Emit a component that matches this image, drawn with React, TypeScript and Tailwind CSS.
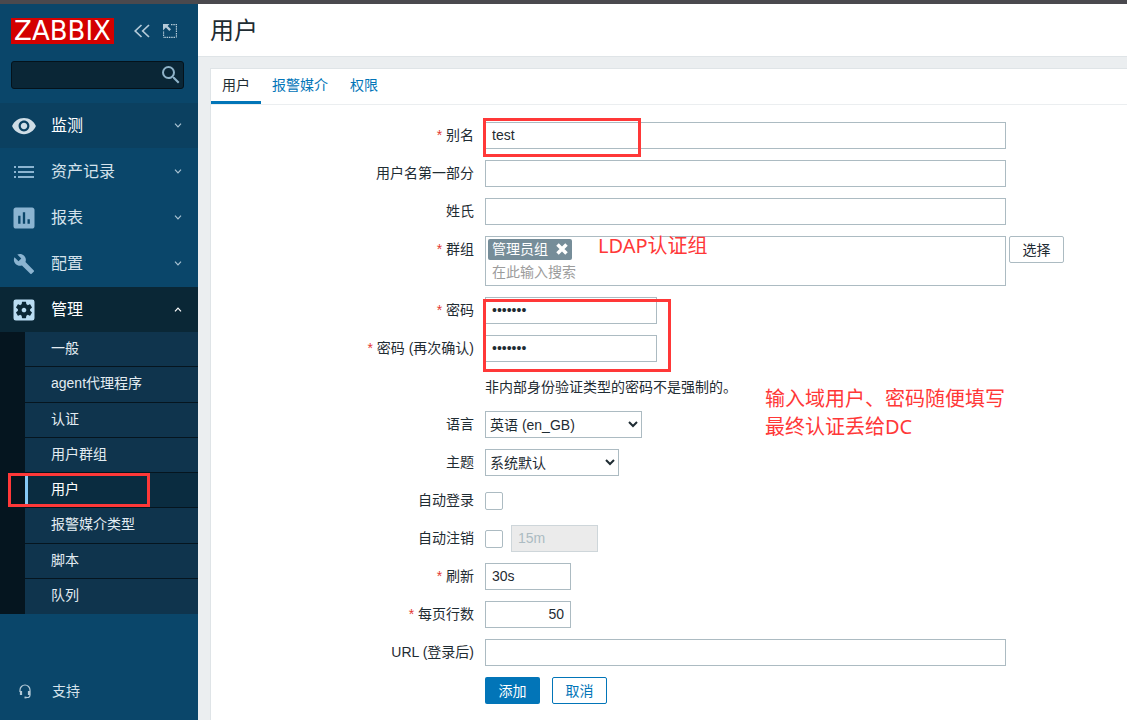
import { useState, type InputHTMLAttributes, type ReactNode } from 'react'
import { clsx } from 'clsx'
import { MdAssessment, MdBuild, MdSearch, MdSettingsApplications, MdVisibility } from 'react-icons/md'

function ListIcon() {
  return (
    <svg className="h-3 w-5" fill="currentColor" viewBox="0 0 20 12">
      <path d="M0 0h2v2H0zM4 0h16v2H4zM0 5h2v2H0zM4 5h16v2H4zM0 10h2v2H0zM4 10h16v2H4z" />
    </svg>
  )
}

function HeadsetIcon() {
  return (
    <svg className="h-[15px] w-3" fill="none" stroke="currentColor" viewBox="0 0 12 15">
      <path d="M1 8V6a5 5 0 0 1 10 0v5a2.500 2.500 0 0 1-2.500 2.500H7" strokeWidth="1.200" />
      <path d="M2 7v4M10 7v4" strokeWidth="2.200" />
      <path d="M5.500 13.500h2" strokeWidth="1.800" />
    </svg>
  )
}

function CollapseIcon() {
  return (
    <svg className="h-3.5 w-4" fill="none" stroke="currentColor" strokeWidth="1.700" viewBox="0 0 16 14">
      <path d="M7.500 1 1.200 7l6.300 6M15 1 8.700 7l6.300 6" />
    </svg>
  )
}

function KioskIcon() {
  return (
    <svg className="h-3.5 w-3.5" fill="none" stroke="currentColor" viewBox="0 0 14 14">
      <path d="M8 .5h6M13.500 2v12M12 13.500H0M.5 12V7" strokeDasharray="1.500 .8" strokeWidth="1.300" />
      <path d="M0 0h6.500L4.600 1.900l3.400 3.400L6.300 7 2.900 3.600 0 6.500z" fill="currentColor" stroke="none" />
    </svg>
  )
}

function Chevron({ up }: { up?: boolean }) {
  return (
    <svg
      className={clsx('h-[5px] w-2', up ? 'text-white' : 'text-[#a9c3d3]')}
      fill="none"
      stroke="currentColor"
      strokeWidth="1.200"
      viewBox="0 0 8 5"
    >
      <path d={up ? 'M1 4.300 4 1.200l3 3.100' : 'M1 .7l3 3.100L7 .7'} />
    </svg>
  )
}

const menu = [
  { label: '监测', icon: <MdVisibility className="h-[26px] w-[26px] text-[#cfdde6]" />, state: 'hover' },
  { label: '资产记录', icon: <ListIcon />, state: '' },
  { label: '报表', icon: <MdAssessment className="h-7 w-7" />, state: '' },
  { label: '配置', icon: <MdBuild className="h-[22px] w-[22px]" />, state: '' },
  { label: '管理', icon: <MdSettingsApplications className="h-7 w-7 text-[#b9dcf2]" />, state: 'open' },
]

const submenu = ['一般', 'agent代理程序', '认证', '用户群组', '用户', '报警媒介类型', '脚本', '队列']

const tabs = ['用户', '报警媒介', '权限']

function Sidebar() {
  return (
    <aside className="flex w-[198px] shrink-0 flex-col bg-[#0a466a] text-[#d5e3ec]">
      <div className="flex items-center pt-3.5 pl-[11px]">
        <a
          className="flex h-[26px] w-[103px] items-center justify-center bg-[#d40000] font-['DejaVu_Sans',sans-serif] text-[26px] leading-[26px] text-white"
          href="#"
        >
          ZABBIX
        </a>
        <button aria-label="收起" className="ml-5 text-[#b4cad8]" type="button">
          <CollapseIcon />
        </button>
        <button aria-label="全屏" className="ml-[13px] text-[#b4cad8]" type="button">
          <KioskIcon />
        </button>
      </div>

      <div className="mt-[17px] mr-3.5 ml-[11px] flex h-7 items-center rounded-[3px] border border-[#04121b] bg-[#0a2636]">
        <input aria-label="搜索" className="min-w-0 flex-1 bg-transparent px-2 text-white outline-none" type="text" />
        <button aria-label="搜索" className="text-[#8fb3c9]" type="button">
          <MdSearch className="h-6 w-6" />
        </button>
      </div>

      <nav className="mt-3.5">
        <ul className="flex flex-col gap-px">
          {menu.map((item) => (
            <li key={item.label}>
              <button
                aria-expanded={item.state === 'open'}
                className={clsx(
                  'flex h-[45px] w-full items-center pr-4 text-left text-base',
                  item.state === 'open' && 'bg-[#0a2736] text-white',
                  item.state === 'hover' && 'bg-[#0b4060] text-white',
                )}
                type="button"
              >
                <span className="flex w-12 justify-center text-[#8bb4d1]">{item.icon}</span>
                <span className="ml-[3px] flex-1">{item.label}</span>
                <Chevron up={item.state === 'open'} />
              </button>
            </li>
          ))}
        </ul>
        <ul className="grid h-[282px] grid-rows-8 bg-[#05151f] pl-[25px] text-sm">
          {submenu.map((label) => (
            <li key={label} className="relative border-b border-[#05151f] last:border-b-0">
              <a
                className={clsx(
                  'flex h-full items-center pb-0.5',
                  label === '用户'
                    ? 'border-l-[3px] border-[#85c8f5] bg-[#0a2c40] pl-[23px] text-white'
                    : 'bg-[#0f344d] pl-[26px] text-[#e3ecf2]',
                )}
                href="#"
              >
                {label}
              </a>
              {label === '用户' ? (
                <span className="pointer-events-none absolute top-0 -left-[17px] h-[34px] w-[142px] border-3 border-[#ff3838]" />
              ) : null}
            </li>
          ))}
        </ul>
      </nav>

      <a className="mt-auto mb-[19px] flex items-center text-sm" href="#">
        <span className="flex w-[49px] justify-center text-[#b4cad8]">
          <HeadsetIcon />
        </span>
        <span className="ml-[3px]">支持</span>
      </a>
    </aside>
  )
}

function Row({
  label,
  htmlFor,
  required,
  children,
}: {
  label?: string
  htmlFor?: string
  required?: boolean
  children: ReactNode
}) {
  return (
    <div className="grid grid-cols-[263px_1fr] gap-[11px]">
      <div className="h-[27px] text-right leading-[27px]">
        {label ? (
          <label htmlFor={htmlFor}>
            {required ? <span className="text-[#e33734]">* </span> : null}
            {label}
          </label>
        ) : null}
      </div>
      <div className="relative flex min-h-[27px] items-center">{children}</div>
    </div>
  )
}

function TextInput({ className, ...props }: InputHTMLAttributes<HTMLInputElement>) {
  return (
    <input
      className={clsx('h-[27px] border border-[#acbbc2] px-1.5 pb-0.5 outline-none disabled:border-[#ced6da] disabled:bg-[#ebebeb] disabled:text-[#acbbc2]', className)}
      {...props}
    />
  )
}

const checkbox = 'h-[18px] w-[18px] appearance-none rounded-[2px] border border-[#acbbc2] bg-white checked:bg-[#0275b8]'
const select = 'h-[27px] border border-[#acbbc2] bg-white outline-none'
const note = "pointer-events-none absolute font-['Noto_Sans','Noto_Sans_CJK_SC',sans-serif] text-xl leading-7 whitespace-nowrap text-[#ff3838]"
const frame = 'pointer-events-none absolute border-3 border-[#ff3838]'

function UserForm() {
  return (
    <form className="flex flex-col gap-[11px] pt-[17px] pb-3" onSubmit={(e) => e.preventDefault()}>
      <Row htmlFor="alias" label="别名" required>
        <TextInput className="w-full max-w-[521px]" defaultValue="test" id="alias" type="text" />
        <span className={clsx(frame, '-top-1 -left-0.5 h-[39px] w-[158px]')} />
      </Row>
      <Row htmlFor="name" label="用户名第一部分">
        <TextInput className="w-full max-w-[521px]" id="name" type="text" />
      </Row>
      <Row htmlFor="surname" label="姓氏">
        <TextInput className="w-full max-w-[521px]" id="surname" type="text" />
      </Row>
      <Row htmlFor="groups" label="群组" required>
        <div className="flex w-full items-start gap-[3px]">
          <div className="h-[50px] w-full max-w-[521px] border border-[#acbbc2] p-0.5">
            <span className="flex h-[21px] w-fit items-center gap-2 rounded-[2px] bg-[#768d99] px-1 pb-0.5 text-white">
              管理员组
              <button aria-label="移除" type="button">
                <svg className="h-3 w-3" fill="none" stroke="currentColor" strokeWidth="3.500" viewBox="0 0 12 12">
                  <path d="M1.500 1.500l9 9M10.500 1.500l-9 9" />
                </svg>
              </button>
            </span>
            <input
              className="block h-[23px] w-full px-1 outline-none placeholder:text-[#9c9c9c]"
              id="groups"
              placeholder="在此输入搜索"
              type="text"
            />
          </div>
          <button className="h-[27px] w-[55px] shrink-0 rounded-[2px] border border-[#acbbc2]" type="button">
            选择
          </button>
        </div>
        <p className={clsx(note, '-top-1 left-[113px]')}>LDAP认证组</p>
      </Row>
      <Row htmlFor="password1" label="密码" required>
        <TextInput className="w-[172px]" defaultValue="zabbix1" id="password1" type="password" />
        <span className={clsx(frame, 'top-0.5 -left-0.5 z-10 h-[73px] w-[188px]')} />
      </Row>
      <Row htmlFor="password2" label="密码 (再次确认)" required>
        <TextInput className="w-[172px]" defaultValue="zabbix1" id="password2" type="password" />
      </Row>
      <Row>
        <p>非内部身份验证类型的密码不是强制的。</p>
        <p className={clsx(note, 'top-3 left-[280px]')}>
          输入域用户、密码随便填写
          <br />
          最终认证丢给DC
        </p>
      </Row>
      <Row htmlFor="lang" label="语言">
        <select className={clsx(select, 'w-[157px]')} id="lang">
          <option>英语 (en_GB)</option>
        </select>
      </Row>
      <Row htmlFor="theme" label="主题">
        <select className={clsx(select, 'w-[134px]')} id="theme">
          <option>系统默认</option>
        </select>
      </Row>
      <Row htmlFor="autologin" label="自动登录">
        <input className={checkbox} id="autologin" type="checkbox" />
      </Row>
      <Row htmlFor="autologout" label="自动注销">
        <input className={checkbox} id="autologout" type="checkbox" />
        <TextInput aria-label="自动注销时间" className="ml-2 w-[87px]" defaultValue="15m" disabled type="text" />
      </Row>
      <Row htmlFor="refresh" label="刷新" required>
        <TextInput className="w-[86px]" defaultValue="30s" id="refresh" type="text" />
      </Row>
      <Row htmlFor="rows" label="每页行数" required>
        <TextInput className="w-[86px] text-right" defaultValue="50" id="rows" type="text" />
      </Row>
      <Row htmlFor="url" label="URL (登录后)">
        <TextInput className="w-full max-w-[521px]" id="url" type="text" />
      </Row>
      <Row>
        <div className="flex gap-3">
          <button className="h-[27px] w-[55px] rounded-[2px] bg-[#0275b8] text-white" type="submit">
            添加
          </button>
          <button className="h-[27px] w-[55px] rounded-[2px] border border-[#0275b8] text-[#0275b8]" type="button">
            取消
          </button>
        </div>
      </Row>
    </form>
  )
}

export default function App() {
  const [tab, setTab] = useState('用户')

  return (
    <div className="flex min-h-screen flex-col border-t-4 border-[#4a494e] font-['Liberation_Sans','Noto_Sans_CJK_SC',sans-serif] text-sm text-[#1f2c33]">
      <div className="flex flex-1">
        <Sidebar />
        <main className="flex min-w-0 flex-1 flex-col bg-[#ebeef0]">
          <header className="flex h-[53px] items-center border-b border-[#dfe4e7] bg-white pt-0.5 pl-3">
            <h1 className="text-2xl">用户</h1>
          </header>
          <div className="mt-[11px] ml-3 flex-1 border-t border-l border-[#dfe4e7] bg-white">
            <div className="flex h-9 border-b border-[#ebeef0]" role="tablist">
              {tabs.map((name) => (
                <button
                  key={name}
                  aria-selected={tab === name}
                  className={clsx(
                    'border-b-3 px-[11px]',
                    tab === name ? 'border-[#0275b8]' : 'border-transparent text-[#0275b8]',
                  )}
                  onClick={() => setTab(name)}
                  role="tab"
                  type="button"
                >
                  {name}
                </button>
              ))}
            </div>
            <UserForm />
          </div>
        </main>
      </div>
    </div>
  )
}
